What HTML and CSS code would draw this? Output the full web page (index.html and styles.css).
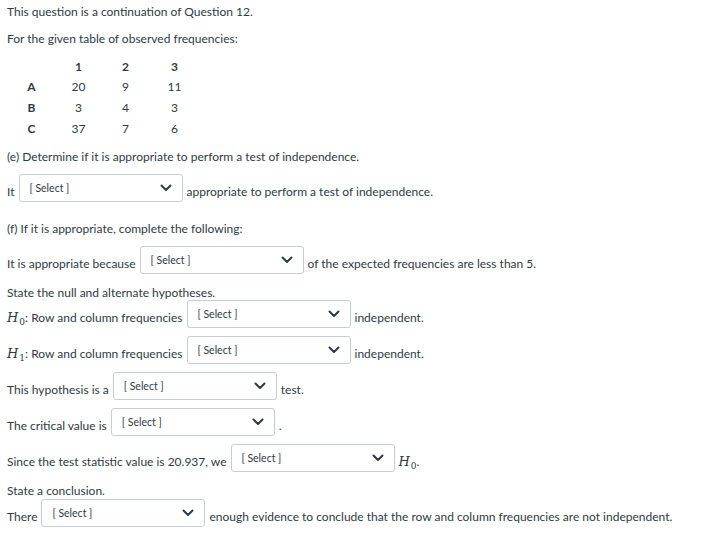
FILE: index.html
```html
<!DOCTYPE html>
<html>
<head>
<meta charset="utf-8">
<link rel="stylesheet" href="styles.css">
</head>
<body>
<div class="page">
  <p class="line first">This question is a continuation of Question 12.</p>
  <p class="line gap9">For the given table of observed frequencies:</p>
  <table class="freq">
    <thead>
      <tr class="head"><th></th><th>1</th><th>2</th><th>3</th></tr>
    </thead>
    <tbody>
      <tr><th>A</th><td>20</td><td>9</td><td>11</td></tr>
      <tr><th>B</th><td>3</td><td>4</td><td>3</td></tr>
      <tr><th>C</th><td>37</td><td>7</td><td>6</td></tr>
    </tbody>
  </table>
  <p class="line gap9">(e) Determine if it is appropriate to perform a test of independence.</p>
  <div class="row gap8">
    <span>It</span>
    <span class="select"><span class="ph">[ Select ]</span><svg class="chev" viewBox="0 0 12 8" width="12" height="8"><path d="M1.5 1.5 L6 6 L10.5 1.5" /></svg></span>
    <span>appropriate to perform a test of independence.</span>
  </div>
  <p class="line gap18">(f) If it is appropriate, complete the following:</p>
  <div class="row gap8">
    <span>It is appropriate because</span>
    <span class="select"><span class="ph">[ Select ]</span><svg class="chev" viewBox="0 0 12 8" width="12" height="8"><path d="M1.5 1.5 L6 6 L10.5 1.5" /></svg></span>
    <span>of the expected frequencies are less than 5.</span>
  </div>
  <p class="line gap10">State the null and alternate hypotheses.</p>
  <div class="row pull2">
    <span><i class="math">H</i><sub class="msub">0</sub>: Row and column frequencies</span>
    <span class="select"><span class="ph">[ Select ]</span><svg class="chev" viewBox="0 0 12 8" width="12" height="8"><path d="M1.5 1.5 L6 6 L10.5 1.5" /></svg></span>
    <span>independent.</span>
  </div>
  <div class="row gap8">
    <span><i class="math">H</i><sub class="msub">1</sub>: Row and column frequencies</span>
    <span class="select"><span class="ph">[ Select ]</span><svg class="chev" viewBox="0 0 12 8" width="12" height="8"><path d="M1.5 1.5 L6 6 L10.5 1.5" /></svg></span>
    <span>independent.</span>
  </div>
  <div class="row gap8">
    <span>This hypothesis is a</span>
    <span class="select"><span class="ph">[ Select ]</span><svg class="chev" viewBox="0 0 12 8" width="12" height="8"><path d="M1.5 1.5 L6 6 L10.5 1.5" /></svg></span>
    <span>test.</span>
  </div>
  <div class="row gap8">
    <span>The critical value is</span>
    <span class="select"><span class="ph">[ Select ]</span><svg class="chev" viewBox="0 0 12 8" width="12" height="8"><path d="M1.5 1.5 L6 6 L10.5 1.5" /></svg></span>
    <span>.</span>
  </div>
  <div class="row gap8">
    <span>Since the test statistic value is 20.937, we</span>
    <span class="select"><span class="ph">[ Select ]</span><svg class="chev" viewBox="0 0 12 8" width="12" height="8"><path d="M1.5 1.5 L6 6 L10.5 1.5" /></svg></span>
    <span><i class="math">H</i><sub class="msub">0</sub>.</span>
  </div>
  <p class="line gap10">State a conclusion.</p>
  <div class="row pull1">
    <span>There</span>
    <span class="select"><span class="ph">[ Select ]</span><svg class="chev" viewBox="0 0 12 8" width="12" height="8"><path d="M1.5 1.5 L6 6 L10.5 1.5" /></svg></span>
    <span>enough evidence to conclude that the row and column frequencies are not independent.</span>
  </div>
</div>
</body>
</html>
```

FILE: styles.css
```css
html, body {
  margin: 0;
  padding: 0;
  background: #ffffff;
}

body {
  font-family: Lato, "Liberation Sans", sans-serif;
  font-size: 12px;
  line-height: 18px;
  color: #2d3b45;
}

.page {
  padding: 3px 7px 0 7px;
  display: flex;
  flex-direction: column;
  align-items: flex-start;
}

.line {
  margin: 0;
  height: 18px;
  white-space: nowrap;
}

.pull1 { margin-top: -1px; }
.pull2 { margin-top: -2px; }
.gap8 { margin-top: 8px; }
.gap9 { margin-top: 9px; }
.gap10 { margin-top: 10px; }
.gap18 { margin-top: 18px; }

.freq {
  border-collapse: collapse;
  margin-top: 9px;
  margin-left: 1px;
}

.freq th,
.freq td {
  padding: 0;
  text-align: center;
  width: 47px;
  height: 21px;
  font-size: 12px;
}

.freq .head th {
  height: 19px;
}

.freq th {
  font-weight: 700;
}

.freq td {
  font-weight: 400;
}

.freq th:last-child,
.freq td:last-child {
  width: 51px;
}

.row {
  display: flex;
  align-items: flex-end;
  gap: 4px;
  height: 28px;
  white-space: nowrap;
}

.row > span:not(.select) {
  line-height: 18px;
  padding-bottom: 1px;
}

.select {
  box-sizing: border-box;
  width: 164px;
  height: 28px;
  border: 1px solid #c7cdd1;
  border-radius: 3px;
  background: #ffffff;
  display: flex;
  align-items: center;
  justify-content: space-between;
  padding: 0 10px 0 10px;
}

.ph {
  font-size: 10.5px;
  line-height: 12px;
  color: #2d3b45;
  margin-top: -1px;
}

.chev {
  display: block;
  fill: none;
  stroke: #2d3b45;
  stroke-width: 2;
  stroke-linecap: round;
  stroke-linejoin: round;
}

.math {
  font-family: "DejaVu Serif", "Liberation Serif", serif;
  font-style: italic;
  font-size: 13px;
}

.msub {
  font-family: "DejaVu Serif", serif;
  font-size: 9px;
  line-height: 0;
  vertical-align: -3px;
  margin-left: 1px;
}
```
